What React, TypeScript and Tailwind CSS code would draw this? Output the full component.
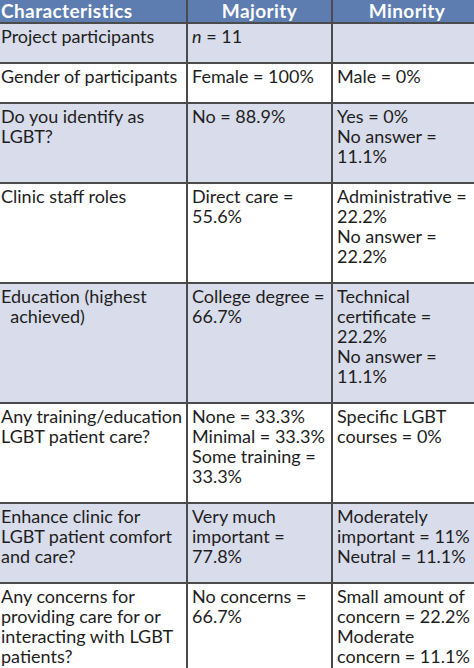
import React from 'react';

type Row = {
  label: string[];
  majority: React.ReactNode[];
  minority: string[];
  shaded: boolean;
};

const rows: Row[] = [
  {
    label: ['Project participants'],
    majority: [<><i>n</i> = 11</>],
    minority: [],
    shaded: true,
  },
  {
    label: ['Gender of participants'],
    majority: ['Female = 100%'],
    minority: ['Male = 0%'],
    shaded: false,
  },
  {
    label: ['Do you identify as', 'LGBT?'],
    majority: ['No = 88.9%'],
    minority: ['Yes = 0%', 'No answer =', '11.1%'],
    shaded: true,
  },
  {
    label: ['Clinic staff roles'],
    majority: ['Direct care =', '55.6%'],
    minority: ['Administrative =', '22.2%', 'No answer =', '22.2%'],
    shaded: false,
  },
  {
    label: ['Education (highest', '\u00a0\u00a0achieved)'],
    majority: ['College degree =', '66.7%'],
    minority: ['Technical', 'certificate =', '22.2%', 'No answer =', '11.1%'],
    shaded: true,
  },
  {
    label: ['Any training/education', 'LGBT patient care?'],
    majority: ['None = 33.3%', 'Minimal = 33.3%', 'Some training =', '33.3%'],
    minority: ['Specific LGBT', 'courses = 0%'],
    shaded: false,
  },
  {
    label: ['Enhance clinic for', 'LGBT patient comfort', 'and care?'],
    majority: ['Very much', 'important =', '77.8%'],
    minority: ['Moderately', 'important = 11%', 'Neutral = 11.1%'],
    shaded: true,
  },
  {
    label: ['Any concerns for', 'providing care for or', 'interacting with LGBT', 'patients?'],
    majority: ['No concerns =', '66.7%'],
    minority: ['Small amount of', 'concern = 22.2%', 'Moderate', 'concern = 11.1%'],
    shaded: false,
  },
];

const Lines: React.FC<{ items: React.ReactNode[] }> = ({ items }) => (
  <>
    {items.map((line, i) => (
      <div key={i} className="whitespace-nowrap">{line}</div>
    ))}
  </>
);

const App: React.FC = () => {
  return (
    <div
      className="w-[474px] h-[668px] overflow-hidden bg-white text-[#1e1e1e]"
      style={{ fontFamily: 'Lato, "Open Sans", sans-serif' }}
    >
      <table className="table-fixed border-collapse w-[483px] -ml-[2px] text-[18px] leading-[20px]">
        <colgroup>
          <col className="w-[188px]" />
          <col className="w-[145px]" />
          <col className="w-[150px]" />
        </colgroup>
        <thead>
          <tr className="bg-[#5d7db0] text-white text-[19px] tracking-[0.4px] font-bold">
            <th className="border-2 border-t-0 border-[#4b4b4b] text-left pl-[1px] h-[23px] leading-[22px] p-0 align-top">
              Characteristics
            </th>
            <th className="border-2 border-t-0 border-[#4b4b4b] text-center h-[23px] leading-[22px] p-0 align-top">
              Majority
            </th>
            <th className="border-2 border-t-0 border-[#4b4b4b] text-center h-[23px] leading-[22px] p-0 align-top">
              Minority
            </th>
          </tr>
        </thead>
        <tbody>
          {rows.map((row, i) => (
            <tr key={i} className={row.shaded ? 'bg-[#d9dcea]' : 'bg-white'}>
              <td className="border-2 border-[#4b4b4b] align-top pl-[1px] pt-[2px] pb-[16px]">
                <Lines items={row.label} />
              </td>
              <td className="border-2 border-[#4b4b4b] align-top pl-[4px] pt-[2px] pb-[16px]">
                <Lines items={row.majority} />
              </td>
              <td className="border-2 border-[#4b4b4b] align-top pl-[4px] pt-[2px] pb-[16px]">
                <Lines items={row.minority} />
              </td>
            </tr>
          ))}
        </tbody>
      </table>
    </div>
  );
};

export default App;
